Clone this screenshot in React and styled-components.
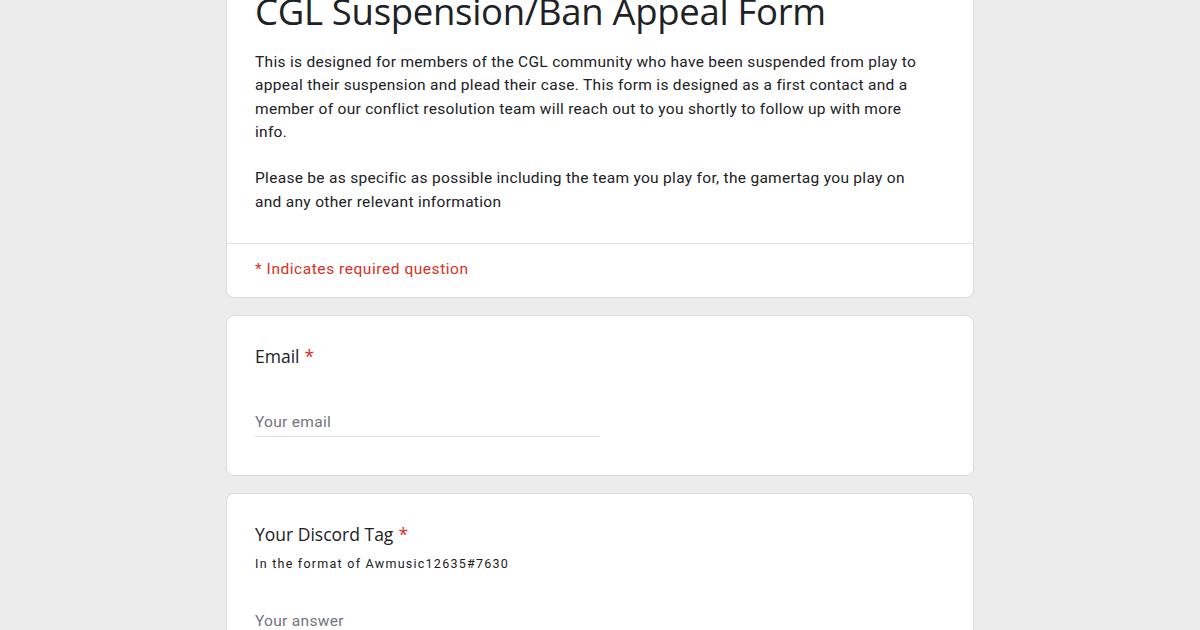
import React from "react";
import styled, { createGlobalStyle } from "styled-components";

const GlobalStyle = createGlobalStyle`
	html, body {
		margin: 0;
		padding: 0;
		background: #ececec;
		font-family: Roboto, "Liberation Sans", Arial, sans-serif;
		color: #202124;
		overflow: hidden;
	}
`;

const Page = styled.main`
	width: 748px;
	margin: -34px auto 0;
	display: flex;
	flex-direction: column;
	gap: 17px;
`;

const Card = styled.section`
	background: #ffffff;
	border: 1px solid #dadce0;
	border-radius: 8px;
	box-sizing: border-box;
	padding: ${(p) => p.$pad || "0 29px"};
`;

const Header = styled.div`
	padding: 22px 24px 29px 28px;
	border-bottom: 1px solid #dadce0;
`;

const Title = styled.h1`
	margin: 0;
	font-family: "Open Sans", Roboto, sans-serif;
	font-weight: 400;
	font-size: 36.5px;
	line-height: 44px;
	letter-spacing: -0.3px;
`;

const Description = styled.div`
	margin-top: 18px;
	font-size: 15.5px;
	line-height: 23.3px;
	letter-spacing: 0.3px;
	white-space: pre-line;
`;

const Required = styled.div`
	padding: 15px 28px 18px;
	color: #d93025;
	font-size: 15.5px;
	line-height: 20px;
	letter-spacing: 0.55px;
`;

const Question = styled.div`
	font-family: "Open Sans", Roboto, sans-serif;
	font-size: 17.5px;
	line-height: 24px;
`;

const Star = styled.span`
	color: #d93025;
	margin-left: 5px;
`;

const Help = styled.div`
	margin-top: 9px;
	font-size: 12.5px;
	line-height: 18px;
	letter-spacing: 1.25px;
`;

const Field = styled.div`
	width: 345px;
	margin-top: ${(p) => p.$top};
	padding-bottom: 4px;
	border-bottom: ${(p) => (p.$line ? "1px solid #dadce0" : "none")};
	color: #70757a;
	font-size: 15.5px;
	line-height: 20px;
	letter-spacing: 0.3px;
`;

const description = `This is designed for members of the CGL community who have been suspended from play to
appeal their suspension and plead their case. This form is designed as a first contact and a
member of our conflict resolution team will reach out to you shortly to follow up with more
info.

Please be as specific as possible including the team you play for, the gamertag you play on
and any other relevant information`;

export default function App() {
	return (
		<>
			<GlobalStyle />
			<Page>
				<Card $pad="0">
					<Header>
						<Title>CGL Suspension/Ban Appeal Form</Title>
						<Description>{description}</Description>
					</Header>
					<Required>* Indicates required question</Required>
				</Card>

				<Card $pad="28px 28px 38px">
					<Question>
						Email<Star>*</Star>
					</Question>
					<Field $top="44px" $line>Your email</Field>
				</Card>

				<Card $pad="28px 28px 40px">
					<Question>
						Your Discord Tag<Star>*</Star>
					</Question>
					<Help>In the format of Awmusic12635#7630</Help>
					<Field $top="38px">Your answer</Field>
				</Card>
			</Page>
		</>
	);
}
